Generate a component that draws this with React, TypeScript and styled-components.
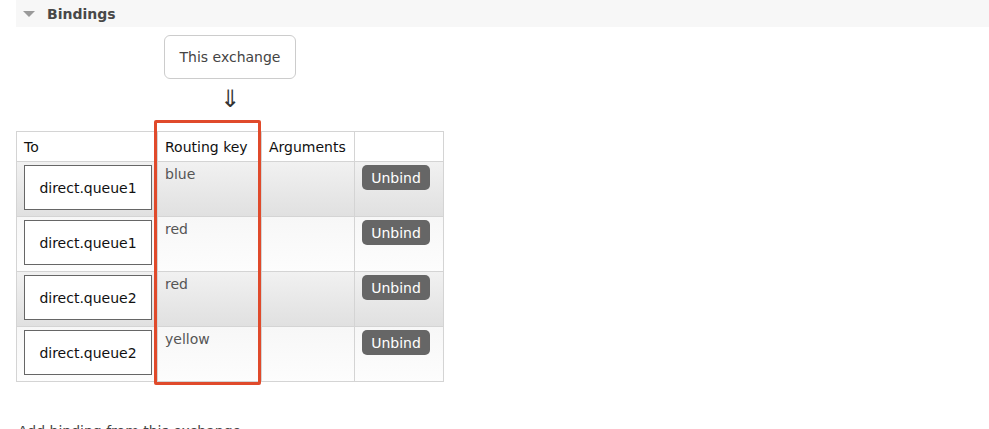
import React from 'react';
import styled, { createGlobalStyle } from 'styled-components';

const GlobalStyle = createGlobalStyle`
  body {
    margin: 0;
    background: #fff;
    font-family: "DejaVu Sans", Verdana, sans-serif;
    font-size: 14px;
    color: #444;
  }
`;

const Section = styled.div`
  margin-left: 16px;
`;

const SectionHeader = styled.div`
  display: flex;
  align-items: center;
  height: 27px;
  padding-left: 7px;
  background: #f7f7f7;
`;

const Toggle = styled.span`
  width: 0;
  height: 0;
  border-left: 6px solid transparent;
  border-right: 6px solid transparent;
  border-top: 6px solid #9a9a9a;
  margin-right: 12px;
  margin-top: 1px;
`;

const Title = styled.h2`
  margin: 0;
  font-size: 14px;
  font-weight: bold;
  color: #484848;
`;

const SectionBody = styled.div`
  padding-top: 8px;
`;

const Source = styled.div`
  display: flex;
  flex-direction: column;
  align-items: center;
  width: 132px;
  margin-left: 148px;
`;

const ExchangeBox = styled.div`
  box-sizing: border-box;
  width: 132px;
  height: 44px;
  display: flex;
  align-items: center;
  justify-content: center;
  border: 1px solid #ccc;
  border-radius: 6px;
  color: #444;
  font-size: 14px;
`;

const Arrow = styled.div`
  font-size: 24px;
  line-height: 26px;
  height: 28px;
  margin-top: 7px;
  color: #333;
`;

const TableWrap = styled.div`
  position: relative;
  display: inline-block;
  margin-top: 17px;
`;

const List = styled.table`
  border-collapse: collapse;
  table-layout: fixed;
  width: 427px;
`;

// widths are content widths; each cell adds 14px padding and a 1px rule
const HeadCell = styled.th<{ $w: number }>`
  width: ${(p) => p.$w}px;
  height: 29px;
  padding: 0 7px;
  border: 1px solid #d4d4d4;
  background: #fff;
  color: #111;
  font-weight: normal;
  text-align: left;
  font-size: 14px;
`;

const Row = styled.tr<{ $alt: boolean }>`
  background: ${(p) =>
    p.$alt
      ? 'linear-gradient(#f1f1f1, #e0e0e0)'
      : 'linear-gradient(#f7f7f7, #fdfdfd)'};
`;

const Cell = styled.td`
  padding: 3px 7px 6px;
  border: 1px solid #d4d4d4;
  vertical-align: top;
  color: #555;
  font-size: 14px;
`;

const KeyText = styled.div`
  padding-top: 1px;
`;

const QueueBox = styled.div`
  box-sizing: border-box;
  width: 128px;
  height: 45px;
  display: flex;
  align-items: center;
  justify-content: center;
  border: 1px solid #666;
  background: #fff;
  color: #111;
  font-size: 14px;
`;

const UnbindButton = styled.button`
  width: 68px;
  height: 25px;
  padding: 0;
  border: none;
  border-radius: 5px;
  background: #666;
  color: #fff;
  font-family: inherit;
  font-size: 14px;
  font-weight: normal;
`;

const Highlight = styled.div`
  position: absolute;
  left: 138px;
  top: -11px;
  width: 107px;
  height: 265px;
  box-sizing: border-box;
  border: 3px solid #e04a2b;
  border-radius: 2px;
  pointer-events: none;
`;

const Subheading = styled.p`
  margin: 38px 0 0 2px;
  color: #444;
  font-size: 14px;
`;

const bindings = [
  { queue: 'direct.queue1', key: 'blue' },
  { queue: 'direct.queue1', key: 'red' },
  { queue: 'direct.queue2', key: 'red' },
  { queue: 'direct.queue2', key: 'yellow' },
];

const App: React.FC = () => {
  return (
    <>
      <GlobalStyle />
      <Section>
        <SectionHeader>
          <Toggle />
          <Title>Bindings</Title>
        </SectionHeader>
        <SectionBody>
          <Source>
            <ExchangeBox>This exchange</ExchangeBox>
            <Arrow>⇓</Arrow>
          </Source>
          <TableWrap>
            <List>
              <thead>
                <tr>
                  <HeadCell $w={126}>To</HeadCell>
                  <HeadCell $w={89}>Routing key</HeadCell>
                  <HeadCell $w={78}>Arguments</HeadCell>
                  <HeadCell $w={74}></HeadCell>
                </tr>
              </thead>
              <tbody>
                {bindings.map((b, i) => (
                  <Row key={i} $alt={i % 2 === 0}>
                    <Cell>
                      <QueueBox>{b.queue}</QueueBox>
                    </Cell>
                    <Cell>
                      <KeyText>{b.key}</KeyText>
                    </Cell>
                    <Cell></Cell>
                    <Cell>
                      <UnbindButton>Unbind</UnbindButton>
                    </Cell>
                  </Row>
                ))}
              </tbody>
            </List>
            <Highlight />
          </TableWrap>
          <Subheading>Add binding from this exchange</Subheading>
        </SectionBody>
      </Section>
    </>
  );
};

export default App;
